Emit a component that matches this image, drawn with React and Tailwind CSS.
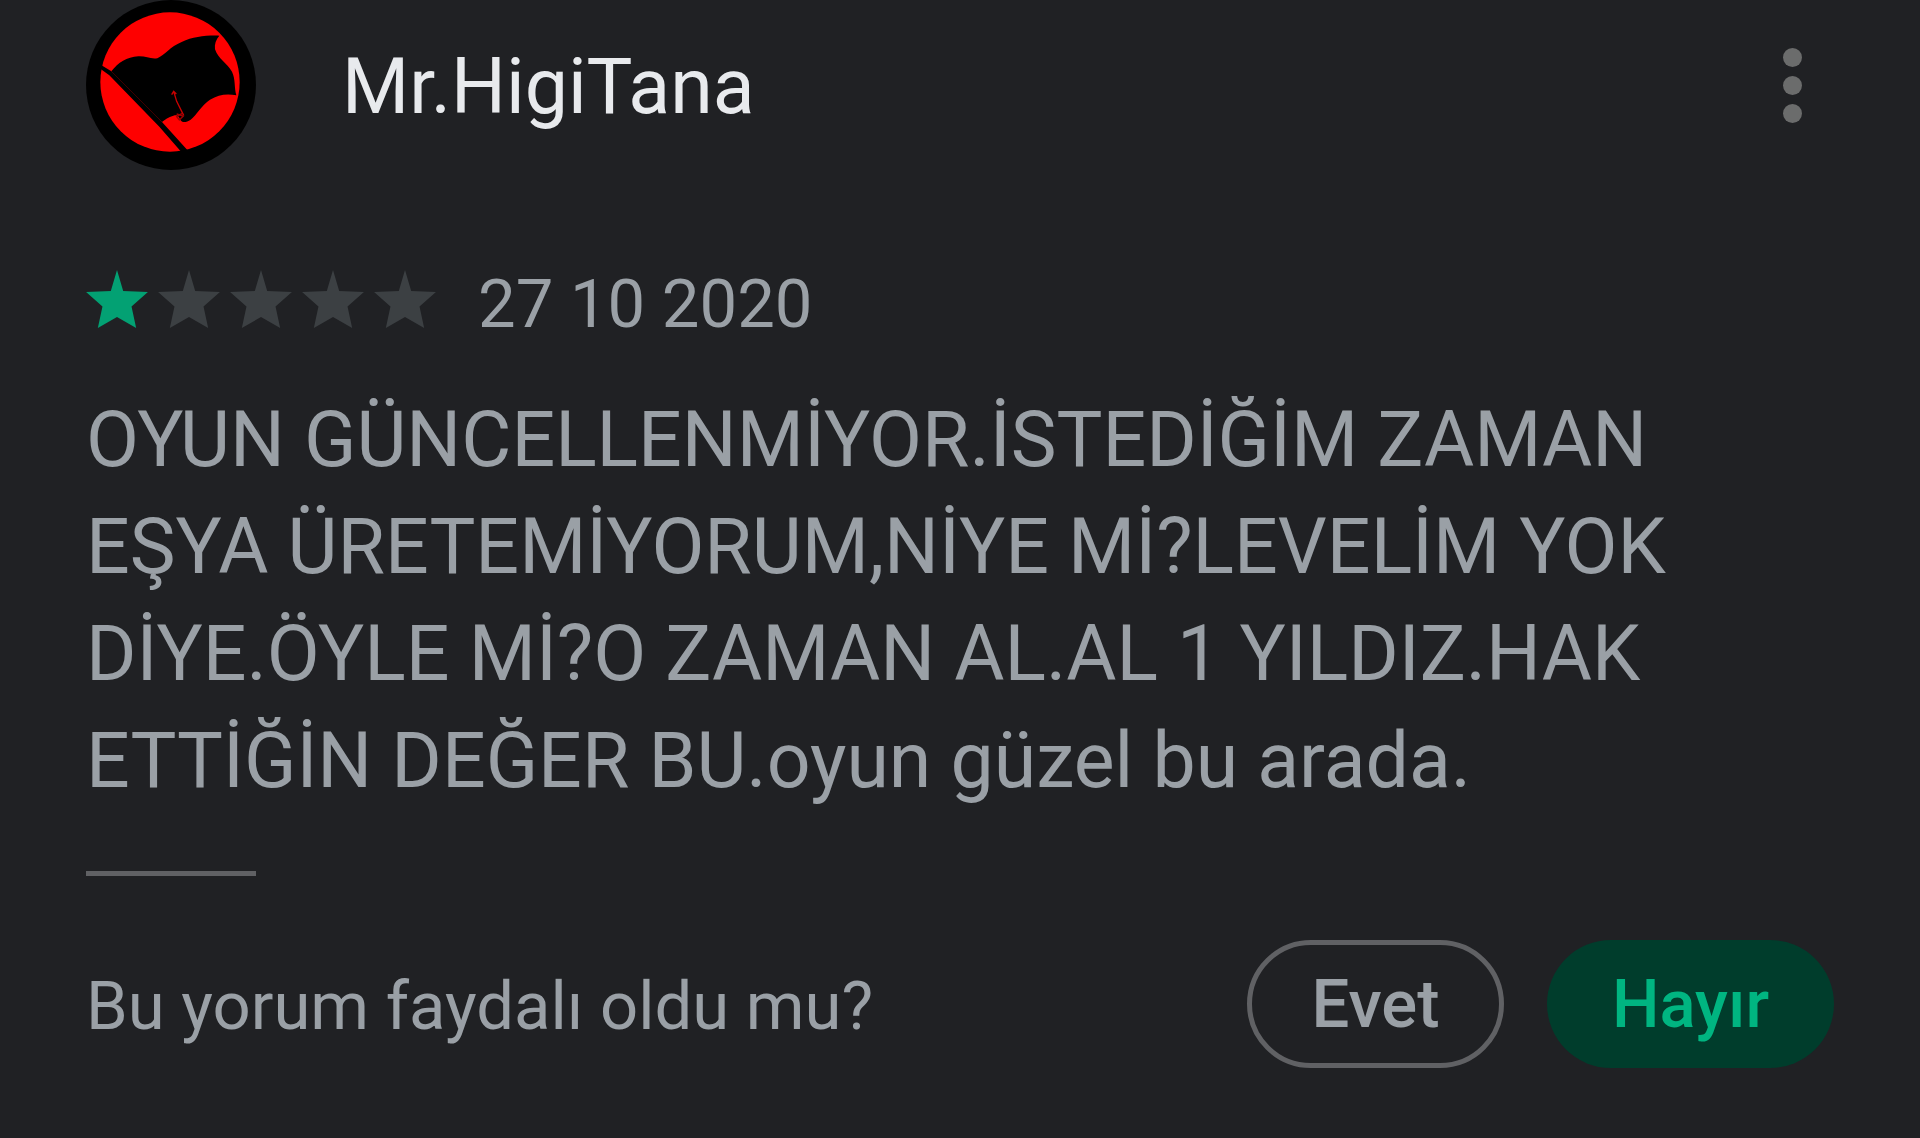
import React from 'react';

const review = {
  author: 'Mr.HigiTana',
  rating: 1,
  date: '27 10 2020',
  lines: [
    'OYUN GÜNCELLENMİYOR.İSTEDİĞİM ZAMAN',
    'EŞYA ÜRETEMİYORUM,NİYE Mİ?LEVELİM YOK',
    'DİYE.ÖYLE Mİ?O ZAMAN AL.AL 1 YILDIZ.HAK',
    'ETTİĞİN DEĞER BU.oyun güzel bu arada.',
  ],
};

// Black flag on a red disc
const Avatar = () => (
  <svg viewBox="48 0 510 510" className="w-[170px] h-[170px] shrink-0" aria-hidden="true">
    <circle cx="303" cy="255" r="255" fill="#000000" />
    <circle cx="300" cy="246" r="209" fill="#fe0000" />
    <path
      d="M124 214C145 188 170 171 205 169C228 168 240 178 262 175C285 165 300 140 335 126C370 110 405 106 448 107C438 118 433 132 435 148C445 178 472 190 486 215C497 238 492 262 499 286C470 280 445 284 420 299C395 315 380 345 362 359C350 367 338 368 333 362C325 350 325 342 310 347C295 352 285 358 276 366Z"
      fill="#000000"
    />
    <path d="M92 194L124 214L276 366L352 450L336 458L268 380L118 226L92 207Z" fill="#000000" />
    <path d="M311 274L320 304L341 346M305 284L311 274L319 282" fill="none" stroke="#c80000" strokeWidth="4" />
    <path d="M320 342L340 348L328 360L320 350L336 340" fill="none" stroke="#a00000" strokeWidth="4" />
  </svg>
);

const Star = ({ filled }) => (
  <svg viewBox="2 2 20 22" className="w-[62px] h-[68px]" aria-hidden="true">
    <path
      d="M12 2L14 8.8L22 9.1L16.7 13.8L18.2 20.8L12 17.2L5.8 20.8L7.3 13.8L2 9.1L10 8.8Z"
      className={filled ? 'fill-[#03a173]' : 'fill-[#3c4043]'}
    />
  </svg>
);

const App = () => {
  return (
    <main
      lang="tr"
      className="min-h-screen bg-[#202124] px-[86px] pb-[70px] font-['Roboto',sans-serif] text-[#9aa0a6]"
    >
      {/* Author */}
      <header className="flex items-center gap-[86px]">
        <Avatar />
        <h1 className="flex-1 pt-1 text-[77px] leading-[88px] text-[#e8eaed]">{review.author}</h1>
        <button type="button" aria-label="Menü" className="flex flex-col gap-[9px] px-8">
          <span className="w-[19px] h-[19px] rounded-full bg-[#6b6c6c]" />
          <span className="w-[19px] h-[19px] rounded-full bg-[#6b6c6c]" />
          <span className="w-[19px] h-[19px] rounded-full bg-[#6b6c6c]" />
        </button>
      </header>

      {/* Rating and date */}
      <div className="mt-24 flex items-center gap-[42px]">
        <div className="flex gap-[10px]" role="img" aria-label={`${review.rating} / 5`}>
          {[1, 2, 3, 4, 5].map((value) => (
            <Star key={value} filled={value <= review.rating} />
          ))}
        </div>
        <time dateTime="2020-10-27" className="text-[67px] leading-[76px]">
          {review.date}
        </time>
      </div>

      {/* Review text */}
      <p className="mt-[45px] text-[77px] leading-[107px]">
        {review.lines.map((line) => (
          <span key={line} className="block">
            {line}
          </span>
        ))}
      </p>

      <hr className="mt-14 w-[170px] border-t-5 border-[#606164]" />

      {/* Feedback */}
      <div className="mt-16 flex items-center justify-between">
        <p className="pt-1 text-[67px] leading-[76px]">Bu yorum faydalı oldu mu?</p>
        <div className="flex gap-[43px] text-[67px] leading-[76px] font-medium">
          <button
            type="button"
            className="h-32 min-w-[257px] rounded-full border-5 border-[#606164] px-12"
          >
            Evet
          </button>
          <button
            type="button"
            className="h-32 min-w-[287px] rounded-full bg-[#003d2c] px-12 text-[#00b581]"
          >
            Hayır
          </button>
        </div>
      </div>
    </main>
  );
};

export default App;
